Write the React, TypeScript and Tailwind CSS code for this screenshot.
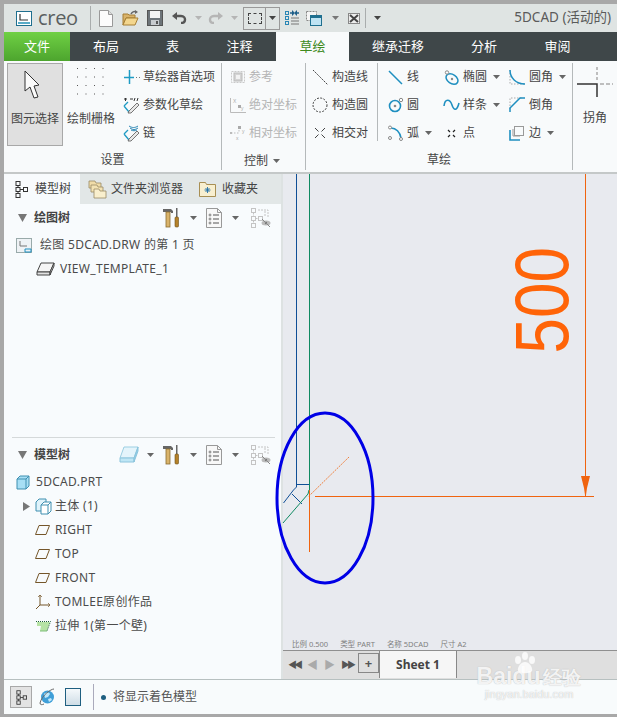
import React from 'react';

const Caret = ({ className = 'fill-[#666]' }: { className?: string }) => (
  <svg width="7" height="4" viewBox="0 0 7 4" className={'shrink-0 ' + className}>
    <path d="M0 0h7L3.500 4z" />
  </svg>
);

const Logo = () => (
  <svg width="16" height="15" viewBox="0 0 16 15" fill="none">
    <rect x="0.500" y="0.500" width="15" height="14" fill="#fff" stroke="#1f6f8f" />
    <path d="M4 3v6h8" stroke="#333" strokeWidth="1.200" />
    <path d="M2 12h12" stroke="#1f8fb5" strokeWidth="1.500" />
  </svg>
);

const NewDoc = () => (
  <svg width="14" height="17" viewBox="0 0 14 17">
    <path d="M.5.500h9l4 4v12H.5z" fill="#fcfcfc" stroke="#999" />
    <path d="M9.500.500v4h4" fill="#ddd" stroke="#999" />
  </svg>
);

const OpenFolder = () => (
  <svg width="17" height="16" viewBox="0 0 17 16">
    <path d="M1 4h5l1 1h6v3H4l-3 7z" fill="#d9b36a" stroke="#a67f35" />
    <path d="M1 15l3-7h12l-3 7z" fill="#f3d68e" stroke="#a67f35" />
    <path d="M9 4c1-2 3-3 5-2" fill="none" stroke="#666" strokeWidth="1.500" />
    <path d="M13 0l3 2-3 2z" fill="#666" />
  </svg>
);

const Save = () => (
  <svg width="16" height="16" viewBox="0 0 16 16">
    <rect x=".5" y=".5" width="15" height="15" fill="#6d7479" stroke="#555" />
    <rect x="3" y="1" width="10" height="7" fill="#f3f3f3" />
    <rect x="4" y="10" width="8" height="5" fill="#c7cbce" />
    <rect x="9" y="11" width="2" height="3" fill="#555" />
  </svg>
);

const Undo = ({ flip, color }: { flip?: boolean; color: string }) => (
  <svg width="15" height="12" viewBox="0 0 15 12" fill="none" className={flip ? '-scale-x-100' : ''}>
    <path d="M3 4h6c3 0 4 2 4 3.500S12 11 9 11" stroke={color} strokeWidth="2.400" />
    <path d="M5 0v8L0 4z" fill={color} />
  </svg>
);

const Regen = () => (
  <svg width="15" height="17" viewBox="0 0 15 17" fill="none">
    <rect x=".5" y="1.500" width="3" height="3" stroke="#2a86b5" />
    <rect x=".5" y="6.500" width="3" height="3" stroke="#2a86b5" />
    <rect x=".5" y="11.500" width="3" height="3" stroke="#2a86b5" />
    <path d="M6 8h8M6 11h8M6 14h8" stroke="#777" />
    <path d="M5 3h3M11 3h3" stroke="#1e5f8a" strokeWidth="1.500" />
    <path d="M7 0l3 3-3 3zM12 0L9 3l3 3z" fill="#1e5f8a" />
  </svg>
);

const WindowIcon = () => (
  <svg width="16" height="15" viewBox="0 0 16 15" fill="none">
    <rect x=".5" y=".5" width="10" height="9" fill="#f5f5f5" stroke="#888" strokeDasharray="2 1" />
    <rect x="4.500" y="4.500" width="11" height="10" fill="#bfe3f3" stroke="#1f6f8f" />
    <path d="M5 5h10v2H5z" fill="#1f6f8f" />
  </svg>
);

const CloseWin = () => (
  <svg width="12" height="11" viewBox="0 0 12 11" fill="none">
    <rect x=".5" y=".5" width="11" height="10" fill="#eee" stroke="#888" />
    <path d="M2 2l8 7M10 2L2 9" stroke="#444" strokeWidth="2" />
  </svg>
);

const CursorBig = () => (
  <svg width="16" height="30" viewBox="0 0 16 30">
    <path d="M1 1v20l5-4 4 11 4-1-4-11 5-1z" fill="#fbfbfb" stroke="#333" strokeWidth="1" />
  </svg>
);

const GridDots = () => (
  <svg width="28" height="28" viewBox="0 0 28 28" fill="#555">
    {[0, 1, 2, 3].map((r) =>
      [0, 1, 2, 3].map((c) => <rect key={r + '-' + c} x={c * 8.500} y={r * 8.500} width="1" height="1" />),
    )}
  </svg>
);

const SketchPref = () => (
  <svg width="16" height="16" viewBox="0 0 16 16" fill="none">
    <path d="M5.500 1v14M0 8.500h10" stroke="#1f9bc4" strokeWidth="1.500" />
    <path d="M12 8.500h1M15 8.500h1" stroke="#777" />
  </svg>
);

const Pencil = ({ variant }: { variant: 'param' | 'chain' }) => (
  <svg width="17" height="17" viewBox="0 0 17 17" fill="none">
    {variant === 'param' ? (
      <path d="M1 2h3M2.500 1v3M7 2h3M12 1l-1 3M15 1l-1 3" stroke="#333" />
    ) : (
      <path d="M6 1c3 2 6 2 9 0M7 3c3 2 5 2 8 0M8 5c2 1 4 1 6 0" stroke="#2a86b5" />
    )}
    <path d="M1 9l4-4M1 9l5 6" stroke="#1f9bc4" strokeWidth="1.300" />
    <path d="M6 14l8-8 2 2-8 8-3 0z" fill="#e8e8e8" stroke="#555" strokeWidth=".8" />
  </svg>
);

const RefIcon = () => (
  <svg width="16" height="14" viewBox="0 0 16 14" fill="none">
    <rect x="1.500" y="1.500" width="13" height="11" stroke="#c9c9c9" strokeDasharray="2 1" />
    <rect x="4" y="3" width="8" height="8" fill="#d4d4d4" stroke="#bbb" />
    <rect x="6" y="5" width="4" height="4" fill="#f2f2f2" />
  </svg>
);

const AbsCoord = () => (
  <svg width="16" height="16" viewBox="0 0 16 16" fill="none">
    <path d="M.5 1v14.500H16" stroke="#bbb" />
    <text x="3" y="6" fontSize="5" fill="#aaa" fontFamily="Liberation Sans">X</text>
    <text x="11" y="13" fontSize="5" fill="#aaa" fontFamily="Liberation Sans">y</text>
    <rect x="8" y="8" width="3" height="3" fill="#aaa" />
  </svg>
);

const RelCoord = () => (
  <svg width="16" height="16" viewBox="0 0 16 16" fill="none">
    <path d="M1 8h8M9 2v6" stroke="#bbb" strokeDasharray="1.500 1.500" />
    <rect x="8" y="1" width="3" height="3" fill="#aaa" />
    <rect x="0" y="7" width="2" height="2" fill="#bbb" />
    <text x="12" y="8" fontSize="5" fill="#aaa" fontFamily="Liberation Sans">y</text>
    <text x="6" y="15" fontSize="5" fill="#aaa" fontFamily="Liberation Sans">x</text>
  </svg>
);

const ConLine = () => (
  <svg width="16" height="16" viewBox="0 0 16 16" fill="none">
    <path d="M1 1l15 15" stroke="#444" strokeDasharray="2 1" />
  </svg>
);

const ConCircle = () => (
  <svg width="16" height="16" viewBox="0 0 16 16" fill="none">
    <circle cx="8" cy="8" r="7" stroke="#444" strokeDasharray="2 1.300" />
  </svg>
);

const Intersect = () => (
  <svg width="12" height="12" viewBox="0 0 12 12" fill="none">
    <path d="M1 1l3.500 3.500M11 1L7.500 4.500M1 11l3.500-3.500M11 11L7.500 7.500" stroke="#444" />
  </svg>
);

const LineIcon = () => (
  <svg width="15" height="15" viewBox="0 0 15 15" fill="none">
    <path d="M1 1l13 13" stroke="#1f8fc0" strokeWidth="1.500" />
  </svg>
);

const CircleIcon = () => (
  <svg width="16" height="16" viewBox="0 0 16 16" fill="none">
    <circle cx="7" cy="9" r="5.500" stroke="#1f8fc0" strokeWidth="1.600" />
    <circle cx="7" cy="9" r="1.300" fill="#888" />
    <circle cx="13" cy="3" r="1.700" fill="#fff" stroke="#888" />
  </svg>
);

const ArcIcon = () => (
  <svg width="15" height="16" viewBox="0 0 15 16" fill="none">
    <path d="M3 3c5 0 9 4 10 10" stroke="#1f8fc0" strokeWidth="1.600" />
    <circle cx="2" cy="2.500" r="1.500" fill="#fff" stroke="#888" />
    <circle cx="13" cy="14" r="1.500" fill="#fff" stroke="#888" />
    <circle cx="2" cy="13" r="1.500" fill="#fff" stroke="#888" />
  </svg>
);

const EllipseIcon = () => (
  <svg width="15" height="15" viewBox="0 0 15 15" fill="none">
    <ellipse cx="8" cy="9" rx="6.500" ry="4.500" transform="rotate(35 8 9)" stroke="#1f8fc0" strokeWidth="1.500" />
    <circle cx="8" cy="9" r="1.200" fill="#888" />
    <circle cx="3" cy="2.500" r="1.700" fill="#fff" stroke="#888" />
  </svg>
);

const SplineIcon = () => (
  <svg width="17" height="12" viewBox="0 0 17 12" fill="none">
    <path d="M1 7c1-8 6-7 8-1s5 6 7-2" stroke="#1f8fc0" strokeWidth="1.600" />
  </svg>
);

const PointIcon = () => (
  <svg width="9" height="9" viewBox="0 0 9 9" fill="none">
    <path d="M1 1l2 2M8 1L6 3M1 8l2-2M8 8L6 6" stroke="#222" strokeWidth="1.200" />
  </svg>
);

const FilletIcon = () => (
  <svg width="16" height="16" viewBox="0 0 16 16" fill="none">
    <path d="M1 1v14h15" stroke="#aaa" strokeDasharray="1.500 1.500" />
    <path d="M1 1c0 8 6 14 15 14" stroke="#1f8fc0" strokeWidth="1.500" />
  </svg>
);

const ChamferIcon = () => (
  <svg width="16" height="16" viewBox="0 0 16 16" fill="none">
    <path d="M1 12V1h12" stroke="#aaa" strokeDasharray="1.500 1.500" />
    <path d="M1 15v-4L11 1h5" stroke="#1f8fc0" strokeWidth="1.500" />
  </svg>
);

const EdgeIcon = () => (
  <svg width="15" height="15" viewBox="0 0 15 15" fill="none">
    <rect x="5.500" y=".5" width="9" height="9" stroke="#999" />
    <path d="M4 3v7h7" stroke="#999" />
    <path d="M1 4v10h10" stroke="#1f8fc0" strokeWidth="1.600" />
  </svg>
);

const CornerIcon = () => (
  <svg width="36" height="30" viewBox="0 0 36 30" fill="none">
    <path d="M0 17h20v13" stroke="#333" strokeWidth="1.500" />
    <path d="M20 0v13" stroke="#aaa" strokeWidth="1.500" strokeDasharray="3 2" />
    <path d="M23 17h13" stroke="#aaa" strokeWidth="1.500" strokeDasharray="4 2" />
  </svg>
);

const TreeIcon = ({ small }: { small?: boolean }) => (
  <svg width={small ? 11 : 13} height={small ? 15 : 17} viewBox="0 0 13 17" fill="none">
    <rect x="1" y=".5" width="4" height="4" stroke="#333" />
    <rect x="1" y="6.500" width="4" height="4" stroke="#333" />
    <rect x="1" y="12.500" width="4" height="4" stroke="#333" />
    <rect x="8.500" y="6.500" width="4" height="4" stroke="#333" />
    <path d="M3 4.500v2M3 10.500v2M5 8.500h3.500" stroke="#333" />
  </svg>
);

const FolderIcon = () => (
  <svg width="19" height="19" viewBox="0 0 19 19">
    <path d="M1 3V1h6l1 2h5v5H1z" fill="#f0dca8" stroke="#998a64" strokeWidth=".8" />
    <path d="M3 7V5h6l1 2h5v5H3z" fill="#f3e3b4" stroke="#998a64" strokeWidth=".8" />
    <path d="M6 18V9h5l1 2h6v7z" fill="#f9efcd" stroke="#998a64" strokeWidth=".8" />
  </svg>
);

const StarFolder = () => (
  <svg width="17" height="15" viewBox="0 0 17 15">
    <path d="M.5 14.500V.5h6l1 2h9v12z" fill="#f8efd0" stroke="#a88f54" />
    <path d="M8.500 5v6M5.500 8h6M6.500 6l4 4M10.500 6l-4 4" stroke="#1f6fa8" strokeWidth=".9" />
  </svg>
);

const Hammer = () => (
  <svg width="17" height="20" viewBox="0 0 17 20">
    <path d="M0 1h8l2 2v2H8V4H0z" fill="#666" />
    <rect x="3" y="4" width="4" height="15" fill="#d9b36a" stroke="#8a6d30" strokeWidth=".8" />
    <rect x="13" y="0" width="1.500" height="9" fill="#666" />
    <rect x="12" y="9" width="3.500" height="10" rx="1" fill="#b5822a" stroke="#6d4f18" strokeWidth=".6" />
  </svg>
);

const DocList = () => (
  <svg width="16" height="20" viewBox="0 0 16 20" fill="none">
    <path d="M.5.500h11l4 4v15H.5z" fill="#f8f8f8" stroke="#999" />
    <path d="M11.500.500v4h4" stroke="#999" />
    <circle cx="4" cy="7" r="1" stroke="#555" strokeWidth=".7" />
    <circle cx="4" cy="11" r="1" stroke="#555" strokeWidth=".7" />
    <circle cx="4" cy="15" r="1" stroke="#555" strokeWidth=".7" />
    <path d="M7 7h6M7 11h6M7 15h6" stroke="#555" />
  </svg>
);

const TreeEye = () => (
  <svg width="20" height="20" viewBox="0 0 20 20" fill="none">
    <g stroke="#c4c4c4">
      <rect x=".5" y=".5" width="4" height="4" />
      <rect x=".5" y="8.500" width="4" height="4" />
      <rect x=".5" y="15.500" width="4" height="4" />
      <rect x="7.500" y="8.500" width="4" height="4" />
      <path d="M2.500 4.500v4M2.500 12.500v3M4.500 10.500h3M7 2h10v8M14 3v6" strokeDasharray="2 1" />
    </g>
    <ellipse cx="15" cy="15" rx="4.500" ry="2.500" fill="#bbb" />
    <circle cx="15" cy="15" r="1.200" fill="#777" />
    <path d="M11 11l8 8" stroke="#888" />
  </svg>
);

const Eraser = () => (
  <svg width="20" height="18" viewBox="0 0 20 18">
    <path d="M5 1h14l-4 11H1z" fill="#e4f4fb" stroke="#9ccfe3" />
    <path d="M1 12h14v4H1z" fill="#bfe6f5" stroke="#8cc4dc" />
    <path d="M15 12l4-11v4l-4 11z" fill="#8fd0ea" stroke="#8cc4dc" />
  </svg>
);

const DrawingPage = () => (
  <svg width="16" height="15" viewBox="0 0 16 15" fill="none">
    <rect x=".5" y=".5" width="15" height="14" fill="#eef2f5" stroke="#9aa" />
    <path d="M4 3v5h7" stroke="#777" />
    <path d="M9 11h6v3H9z" stroke="#1f8fc0" />
  </svg>
);

const ViewBox = () => (
  <svg width="19" height="14" viewBox="0 0 19 14" fill="none" stroke="#444">
    <path d="M5 1h13l-4 9H1z" fill="#f5f5f5" />
    <path d="M1 10h13v3H1zM14 10l4-9v3l-4 9z" fill="#e2e2e2" />
  </svg>
);

const PartCube = () => (
  <svg width="14" height="15" viewBox="0 0 14 15">
    <path d="M1 4l3-3h9v10l-3 3H1z" fill="#a7dff5" stroke="#3f8fb0" />
    <path d="M1 4h9v10M10 4l3-3" fill="none" stroke="#3f8fb0" />
  </svg>
);

const BodyIcon = () => (
  <svg width="17" height="17" viewBox="0 0 17 17" fill="none">
    <path d="M1 4l3-3h7v9l-3 3H1z" fill="#dff3fb" stroke="#3f8fb0" />
    <path d="M6 7l3-3h7v9l-3 3H6z" fill="#fff" stroke="#3f8fb0" />
    <path d="M6 7h7v9M13 7l3-3" stroke="#3f8fb0" />
  </svg>
);

const PlaneIcon = () => (
  <svg width="15" height="10" viewBox="0 0 15 10" fill="none">
    <path d="M4 .5h10.500L11 9.500H.5z" stroke="#75562a" />
  </svg>
);

const CsysIcon = () => (
  <svg width="16" height="16" viewBox="0 0 16 16" fill="none">
    <path d="M5 1v10h10M5 11l-4 4" stroke="#75562a" />
    <path d="M3 3l2-2 2 2M13 9l2 2-2 2" stroke="#75562a" strokeWidth=".7" />
  </svg>
);

const ExtrudeIcon = () => (
  <svg width="16" height="12" viewBox="0 0 16 12" fill="none">
    <path d="M2 2h13l-3 9H5l1-5H2z" fill="#b6e3a5" />
    <path d="M1 1.500h14.500L12 11" stroke="#1f5f3a" strokeDasharray="1 1" />
    <path d="M5 11h7" stroke="#7fbf7a" />
  </svg>
);

const GlobeIcon = () => (
  <svg width="17" height="18" viewBox="0 0 17 18" fill="none">
    <circle cx="8.500" cy="9" r="6.500" fill="#3f9fd8" />
    <path d="M5 6c2-2 5-2 6 0l-2 3-3 1zM9 11l3-1 1 2-3 2z" fill="#bfe7fa" />
    <path d="M15 1C12 1 3 7 1 15c0 2 2 2 4 1" stroke="#666" />
  </svg>
);

const RibbonRow = ({
  icon,
  label,
  caret,
  muted,
  iconW = 'w-[20px]',
}: {
  icon: React.ReactNode;
  label: string;
  caret?: boolean;
  muted?: boolean;
  iconW?: string;
}) => (
  <div className={'h-[28px] flex items-center whitespace-nowrap ' + (muted ? 'text-[#b4b4b4]' : 'text-[#454545]')}>
    <span className={'flex items-center justify-center shrink-0 ' + iconW}>{icon}</span>
    <span className="ml-[3px]">{label}</span>
    {caret && <Caret className="ml-[6px] fill-[#666]" />}
  </div>
);

const GroupLabel = ({ text, caret }: { text: string; caret?: boolean }) => (
  <div className="h-[26px] pt-[3px] flex items-center justify-center gap-[5px] text-[#454545]">
    {text}
    {caret && <Caret />}
  </div>
);

const TreeHead = ({ title, eraser }: { title: string; eraser?: boolean }) => (
  <div className="flex items-center h-[24px] relative">
    <svg width="9" height="8" viewBox="0 0 9 8" className="ml-[14px] fill-[#777] shrink-0">
      <path d="M0 0h9L4.500 8z" />
    </svg>
    <span className="ml-[7px] font-bold text-[#444]">{title}</span>
    <div className="ml-auto mr-[10px] flex items-center">
      {eraser && (
        <>
          <Eraser />
          <Caret className="ml-[8px] mr-[9px] fill-[#666]" />
        </>
      )}
      <Hammer />
      <Caret className="ml-[10px] mr-[9px] fill-[#666]" />
      <DocList />
      <Caret className="ml-[10px] mr-[12px] fill-[#666]" />
      <TreeEye />
    </div>
  </div>
);

const TreeRow = ({
  icon,
  label,
  indent,
  arrow,
  iconW = 'w-[20px]',
}: {
  icon: React.ReactNode;
  label: string;
  indent: string;
  arrow?: boolean;
  iconW?: string;
}) => (
  <div className={'h-[24px] flex items-center text-[#4b4b4b] tracking-[0.3px] whitespace-nowrap ' + indent}>
    {arrow && (
      <svg width="7" height="9" viewBox="0 0 7 9" className="fill-[#777] mr-[5px] -ml-[12px]">
        <path d="M0 0l7 4.500L0 9z" />
      </svg>
    )}
    <span className={'flex items-center shrink-0 ' + iconW}>{icon}</span>
    <span>{label}</span>
  </div>
);

export default function App() {
  return (
    <div className="w-[617px] h-[717px] overflow-hidden bg-[#a8a8a8] pt-[4px] pb-[3px] pl-[4px] flex flex-col text-[12px] leading-none font-['Noto_Sans','Noto_Sans_CJK_SC',sans-serif] relative">
      {/* quick access bar */}
      <div className="h-[28px] shrink-0 bg-[#dfe4e3] flex items-center pl-[12px] pr-[6px] text-[#555]">
        <Logo />
        <span className="ml-[6px] w-[40px] text-[20px] text-[#5a5f60] font-['Open_Sans',sans-serif] tracking-[-0.3px]">creo</span>
        <div className="w-px h-[24px] bg-[#a9adad] ml-[12px] mr-[8px]" />
        <NewDoc />
        <span className="ml-[9px]"><OpenFolder /></span>
        <span className="ml-[8px]"><Save /></span>
        <span className="ml-[9px]"><Undo color="#555" /></span>
        <Caret className="ml-[8px] fill-[#b5b5b5]" />
        <span className="ml-[6px]"><Undo flip color="#b5b5b5" /></span>
        <Caret className="ml-[8px] fill-[#b5b5b5]" />
        <div className="ml-[5px] w-[37px] h-[23px] border border-[#999] flex items-center">
          <span className="w-[22px] flex justify-center">
            <span className="w-[14px] h-[11px] border border-dashed border-[#444]" />
          </span>
          <span className="w-[14px] h-full border-l border-[#999] flex items-center justify-center">
            <Caret className="fill-[#444]" />
          </span>
        </div>
        <span className="ml-[5px]"><Regen /></span>
        <span className="ml-[6px]"><WindowIcon /></span>
        <Caret className="ml-[10px] fill-[#777]" />
        <span className="ml-[9px]"><CloseWin /></span>
        <div className="w-px h-[20px] bg-[#a9adad] ml-[5px]" />
        <Caret className="ml-[8px] fill-[#444]" />
        <span className="ml-auto text-[13.500px] text-[#5a5a5a] whitespace-nowrap">5DCAD (活动的)</span>
      </div>

      {/* ribbon tabs */}
      <div className="h-[29px] shrink-0 flex text-[13px] text-white bg-[#3f4749]">
        <div className="w-[66px] flex items-center justify-center bg-gradient-to-b from-[#6fd044] to-[#4da52e]">文件</div>
        <div className="w-[72px] flex items-center justify-center">布局</div>
        <div className="w-[61px] flex items-center justify-center">表</div>
        <div className="w-[73px] flex items-center justify-center">注释</div>
        <div className="w-[73px] flex items-center justify-center bg-[#f8fafb] text-[#3f8a1e]">草绘</div>
        <div className="w-[98px] flex items-center justify-center">继承迁移</div>
        <div className="w-[74px] flex items-center justify-center">分析</div>
        <div className="w-[73px] flex items-center justify-center">审阅</div>
      </div>

      {/* ribbon */}
      <div className="h-[111px] shrink-0 bg-[#f8fafb] flex">
        <div className="w-[218px] shrink-0 border-r border-[#b5b9ba] my-[2px] flex flex-col">
          <div className="flex h-[83px]">
            <div className="ml-[3px] w-[56px] h-[83px] bg-[#e0e0e0] border border-[#a8a8a8] flex flex-col items-center text-[#454545]">
              <div className="h-[48px] w-full pl-[16px] pt-[6px]"><CursorBig /></div>
              <span className="mt-[1px] whitespace-nowrap">图元选择</span>
            </div>
            <div className="w-[56px] flex flex-col items-center text-[#454545]">
              <div className="h-[49px] pt-[5px] pr-[1px]"><GridDots /></div>
              <span className="mt-[1px] whitespace-nowrap">绘制栅格</span>
            </div>
            <div className="ml-[4px]">
              <RibbonRow icon={<SketchPref />} label="草绘器首选项" iconW="w-[17px]" />
              <RibbonRow icon={<Pencil variant="param" />} label="参数化草绘" iconW="w-[17px]" />
              <RibbonRow icon={<Pencil variant="chain" />} label="链" iconW="w-[17px]" />
            </div>
          </div>
          <GroupLabel text="设置" />
        </div>

        <div className="w-[84px] shrink-0 border-r border-[#b5b9ba] my-[2px] flex flex-col pl-[7px]">
          <div className="h-[83px]">
            <RibbonRow muted icon={<RefIcon />} label="参考" iconW="w-[17px]" />
            <RibbonRow muted icon={<AbsCoord />} label="绝对坐标" iconW="w-[17px]" />
            <RibbonRow muted icon={<RelCoord />} label="相对坐标" iconW="w-[17px]" />
          </div>
          <div className="pr-[10px]">
            <GroupLabel text="控制" caret />
          </div>
        </div>

        <div className="w-[267px] shrink-0 border-r border-[#b5b9ba] my-[2px] flex flex-col">
          <div className="flex h-[83px]">
            <div className="w-[72px] pl-[5px] border-r border-[#b5b9ba] h-[78px]">
              <RibbonRow icon={<ConLine />} label="构造线" iconW="w-[18px]" />
              <RibbonRow icon={<ConCircle />} label="构造圆" iconW="w-[18px]" />
              <RibbonRow icon={<Intersect />} label="相交对" iconW="w-[18px]" />
            </div>
            <div className="w-[63px] pl-[9px]">
              <RibbonRow icon={<LineIcon />} label="线" iconW="w-[17px]" />
              <RibbonRow icon={<CircleIcon />} label="圆" iconW="w-[17px]" />
              <RibbonRow icon={<ArcIcon />} label="弧" iconW="w-[17px]" caret />
            </div>
            <div className="w-[66px] pl-[1px]">
              <RibbonRow icon={<EllipseIcon />} label="椭圆" iconW="w-[18px]" caret />
              <RibbonRow icon={<SplineIcon />} label="样条" iconW="w-[18px]" caret />
              <RibbonRow icon={<PointIcon />} label="点" iconW="w-[18px]" />
            </div>
            <div>
              <RibbonRow icon={<FilletIcon />} label="圆角" iconW="w-[19px]" caret />
              <RibbonRow icon={<ChamferIcon />} label="倒角" iconW="w-[19px]" />
              <RibbonRow icon={<EdgeIcon />} label="边" iconW="w-[19px]" caret />
            </div>
          </div>
          <GroupLabel text="草绘" />
        </div>

        <div className="flex-1 flex flex-col items-center pt-[6px] text-[#454545]">
          <CornerIcon />
          <span className="mt-[15px]">拐角</span>
        </div>
      </div>

      {/* main */}
      <div className="flex-1 min-h-0 flex border-t-[2px] border-[#c4c8c8] relative">
        <div className="w-[277px] shrink-0 bg-[#f8fbfd] flex flex-col">
          <div className="h-[30px] flex shrink-0 text-[#444]">
            <div className="w-[76px] flex items-center pl-[11px] gap-[7px]">
              <TreeIcon />
              模型树
            </div>
            <div className="flex-1 flex items-center bg-[#e2e7e7]">
              <span className="ml-[8px]"><FolderIcon /></span>
              <span className="ml-[4px]">文件夹浏览器</span>
              <span className="ml-[16px]"><StarFolder /></span>
              <span className="ml-[6px]">收藏夹</span>
            </div>
          </div>
          <div className="h-[233px] shrink-0 pt-[2px]">
            <TreeHead title="绘图树" />
            <div className="h-[3px]" />
            <TreeRow icon={<DrawingPage />} label="绘图 5DCAD.DRW 的第 1 页" indent="pl-[12px]" iconW="w-[24px]" />
            <TreeRow icon={<ViewBox />} label="VIEW_TEMPLATE_1" indent="pl-[32px]" iconW="w-[24px]" />
          </div>
          <div className="h-px bg-[#d5d9da] ml-[8px] mr-[6px] shrink-0" />
          <div className="flex-1 pt-[5px]">
            <TreeHead title="模型树" eraser />
            <div className="h-[3px]" />
            <TreeRow icon={<PartCube />} label="5DCAD.PRT" indent="pl-[12px]" />
            <TreeRow icon={<BodyIcon />} label="主体 (1)" indent="pl-[31px]" arrow />
            <TreeRow icon={<PlaneIcon />} label="RIGHT" indent="pl-[31px]" />
            <TreeRow icon={<PlaneIcon />} label="TOP" indent="pl-[31px]" />
            <TreeRow icon={<PlaneIcon />} label="FRONT" indent="pl-[31px]" />
            <TreeRow icon={<CsysIcon />} label="TOMLEE原创作品" indent="pl-[31px]" />
            <TreeRow icon={<ExtrudeIcon />} label="拉伸 1(第一个壁)" indent="pl-[31px]" />
          </div>
        </div>

        <div className="flex-1 min-w-0 flex flex-col border-l-[2px] border-[#dde2e2]">
          {/* drawing canvas */}
          <div className="flex-1 min-h-0 relative bg-[#e8eaef]">
            <svg
              width="334"
              height="476"
              viewBox="283 174 334 476"
              fill="none"
              className="absolute left-0 top-0 overflow-visible"
            >
              <path d="M296.500 174v313l-3 3-10 13M292 494l10 10M296 484.500h13" stroke="#0f4f96" />
              <path d="M309.500 174v316" stroke="#0f8a62" />
              <path d="M309 490l-1 4-25 29" stroke="#0f8a62" />
              <path d="M309.500 490v62" stroke="#f0640f" />
              <path d="M349 457l-41 40" stroke="#f0640f" strokeWidth=".8" strokeDasharray="2 1" />
              <path d="M315 496.500h279M585.500 174v322" stroke="#f0640f" />
              <path d="M581 476h9l-3 12-1 7h-1l-1-7z" fill="#f0640f" />
              <ellipse cx="325" cy="498" rx="48" ry="85" stroke="#0000e6" strokeWidth="3" />
            </svg>
            <span className="absolute left-[199px] top-[91px] w-[120px] text-center origin-center -rotate-90 scale-x-[0.84] text-[76px] leading-none text-[#ff6408] font-['Liberation_Sans',sans-serif]">
              500
            </span>
            <div className="absolute left-[9px] top-[467px] flex gap-[12px] text-[7.500px] leading-none text-[#808080] whitespace-nowrap">
              <span>比例 0.500</span>
              <span>类型 PART</span>
              <span>名称 5DCAD</span>
              <span>尺寸 A2</span>
            </div>
          </div>

          {/* sheet tabs */}
          <div className="h-[29px] shrink-0 bg-[#dfdfdf] border-t border-[#8f8f8f] flex items-start text-[#555]">
            <div className="flex items-center h-[26px] pl-[5px] gap-[7px]">
              <span className="text-[#555] text-[9px] tracking-[-3px] w-[12px]">◀◀</span>
              <span className="text-[#aaa] text-[11px] w-[10px]">◀</span>
              <span className="text-[#aaa] text-[11px] w-[10px]">▶</span>
              <span className="text-[#555] text-[9px] tracking-[-3px] w-[12px]">▶▶</span>
            </div>
            <div className="ml-[5px] mt-[2px] w-[21px] h-[20px] border border-[#888] flex items-center justify-center text-[13px] font-bold">+</div>
            <div className="w-[78px] h-[27px] bg-[#f6f6f6] border-x border-[#888] flex items-center justify-center font-bold text-[#444]">Sheet 1</div>
          </div>
        </div>
      </div>

      {/* status bar */}
      <div className="h-[35px] shrink-0 bg-[#f8fbfc] border-t border-[#b7c0c0] flex items-center pl-[6px] text-[#555]">
        <span className="w-[22px] h-[22px] bg-[#e3e3e3] border border-[#a8a8a8] flex items-center justify-center">
          <TreeIcon small />
        </span>
        <span className="ml-[7px]"><GlobeIcon /></span>
        <span className="ml-[9px] w-[16px] h-[18px] border border-[#1f5f80] bg-gradient-to-b from-[#f5f9fb] to-[#cfdde6]" />
        <div className="w-px h-[26px] bg-[#aab] ml-[12px]" />
        <span className="w-[5px] h-[5px] rounded-full bg-[#1f5f80] ml-[7px]" />
        <span className="ml-[7px]">将显示着色模型</span>
      </div>

      {/* watermark */}
      <div className="absolute left-[474px] top-[652px] w-[110px] flex flex-col items-center text-white pointer-events-none">
        <svg width="26" height="22" viewBox="0 0 26 22" className="fill-white/80 absolute left-[38px] top-0">
          <ellipse cx="6" cy="8" rx="3" ry="4" />
          <ellipse cx="13" cy="4" rx="3" ry="4" />
          <ellipse cx="20" cy="8" rx="3" ry="4" />
          <path d="M13 10c4 0 8 5 7 9-2 3-12 3-14 0-1-4 3-9 7-9z" />
        </svg>
        <div className="mt-[13px] flex items-baseline text-[23px] font-bold font-['Liberation_Sans',sans-serif] text-white/85 [text-shadow:0_0_1px_#aaa]">
          <span>Bai</span><span>du</span><span className="text-[19px] ml-[3px]">经验</span>
        </div>
        <div className="mt-[1px] text-[11px] text-white/85 font-['Liberation_Sans',sans-serif] [text-shadow:0_0_1px_#aaa]">jingyan.baidu.com</div>
      </div>
    </div>
  );
}
